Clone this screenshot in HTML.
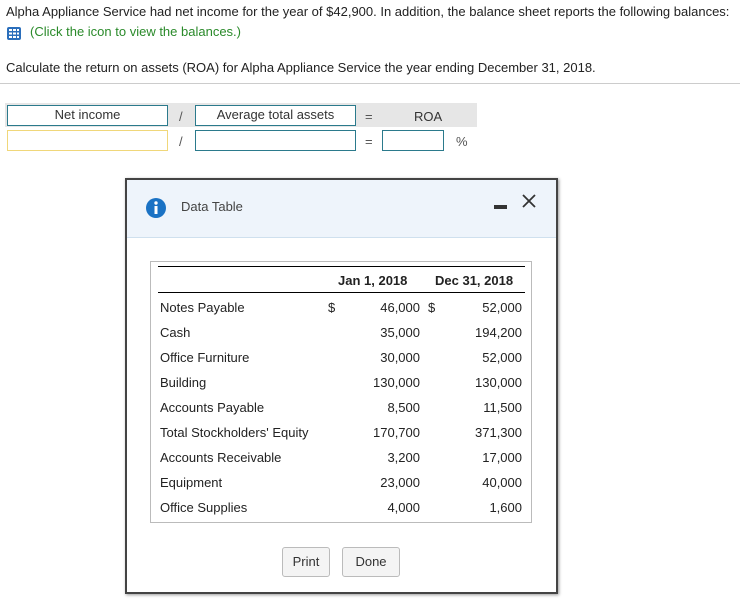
<!DOCTYPE html>
<html><head><style>
body{margin:0;width:740px;height:611px;background:#fff;font-family:"Liberation Sans",sans-serif;font-size:13px;color:#222;position:relative;overflow:hidden}
.a{position:absolute;white-space:nowrap}
.box{position:absolute;border:1px solid #2b7a8c;background:#fff;box-sizing:border-box;text-align:center;line-height:18px;color:#333}
.r{position:absolute;font-size:13px;color:#222}
.num{text-align:right;width:80px}
</style></head><body>
<div class="a" style="left:6px;top:4px">Alpha Appliance Service had net income for the year of $42,900. In addition, the balance sheet reports the following balances:</div>
<svg class="a" style="left:7px;top:27px" width="14" height="13"><rect x="0" y="0" width="14" height="13" rx="2" fill="#2a6ebb"/><g fill="#fff"><rect x="2" y="2" width="3" height="2"/><rect x="6" y="2" width="3" height="2"/><rect x="10" y="2" width="2" height="2"/><rect x="2" y="5.5" width="3" height="2"/><rect x="6" y="5.5" width="3" height="2"/><rect x="10" y="5.5" width="2" height="2"/><rect x="2" y="9" width="3" height="2"/><rect x="6" y="9" width="3" height="2"/><rect x="10" y="9" width="2" height="2"/></g></svg>
<div class="a" style="left:30px;top:24px;color:#2a8a2a">(Click the icon to view the balances.)</div>
<div class="a" style="left:6px;top:60px">Calculate the return on assets (ROA) for Alpha Appliance Service the year ending December 31, 2018.</div>
<div class="a" style="left:0;top:83px;width:740px;height:1px;background:#ccc"></div>
<div class="a" style="left:5px;top:103px;width:472px;height:24px;background:#e6e6e6"></div>
<div class="box" style="left:7px;top:105px;width:161px;height:21px">Net income</div>
<div class="a" style="left:179px;top:109px;color:#555">/</div>
<div class="box" style="left:195px;top:105px;width:161px;height:21px">Average total assets</div>
<div class="a" style="left:365px;top:109px;color:#555">=</div>
<div class="a" style="left:414px;top:109px;color:#333">ROA</div>
<div class="box" style="left:7px;top:130px;width:161px;height:21px;border-color:#f0d77a"></div>
<div class="a" style="left:179px;top:134px;color:#555">/</div>
<div class="box" style="left:195px;top:130px;width:161px;height:21px"></div>
<div class="a" style="left:365px;top:134px;color:#555">=</div>
<div class="box" style="left:382px;top:130px;width:62px;height:21px"></div>
<div class="a" style="left:456px;top:134px;color:#555">%</div>

<div class="a" style="left:125px;top:178px;width:433px;height:416px;box-sizing:border-box;border:2px solid #444;background:#fff;box-shadow:1px 1px 3px #999"></div>
<div class="a" style="left:127px;top:180px;width:429px;height:57px;background:#eef4fb;border-bottom:1px solid #cfe0ee"></div>
<svg class="a" style="left:146px;top:198px" width="20" height="20"><circle cx="10" cy="10" r="10" fill="#1a72c4"/><rect x="8.5" y="8" width="3" height="8" fill="#fff"/><circle cx="10" cy="5" r="1.7" fill="#fff"/></svg>
<div class="a" style="left:181px;top:199px;font-size:13px;color:#444">Data Table</div>
<div class="a" style="left:494px;top:205px;width:13px;height:4px;background:#333"></div>
<svg class="a" style="left:521px;top:193px" width="16" height="16"><path d="M2 2L14 14M14 2L2 14" stroke="#333" stroke-width="1.8"/></svg>

<div class="a" style="left:150px;top:261px;width:382px;height:262px;box-sizing:border-box;border:1px solid #bbb"></div>
<div class="a" style="left:158px;top:266px;width:367px;height:1px;background:#000"></div>
<div class="a" style="left:158px;top:292px;width:367px;height:1px;background:#000"></div>
<div class="r" style="left:338px;top:273px;font-weight:bold">Jan 1, 2018</div>
<div class="r" style="left:435px;top:273px;font-weight:bold">Dec 31, 2018</div>
<div class="r" style="left:160px;top:295px;line-height:25px">Notes Payable<br>Cash<br>Office Furniture<br>Building<br>Accounts Payable<br>Total Stockholders' Equity<br>Accounts Receivable<br>Equipment<br>Office Supplies</div>
<div class="r" style="left:328px;top:295px;line-height:25px">$</div>
<div class="r" style="left:428px;top:295px;line-height:25px">$</div>
<div class="r num" style="left:340px;top:295px;line-height:25px">46,000<br>35,000<br>30,000<br>130,000<br>8,500<br>170,700<br>3,200<br>23,000<br>4,000</div>
<div class="r num" style="left:442px;top:295px;line-height:25px">52,000<br>194,200<br>52,000<br>130,000<br>11,500<br>371,300<br>17,000<br>40,000<br>1,600</div>

<div class="a" style="left:282px;top:547px;width:48px;height:30px;box-sizing:border-box;border:1px solid #bbb;border-radius:3px;background:#f4f4f4;text-align:center;line-height:28px;font-size:13px;color:#333">Print</div>
<div class="a" style="left:342px;top:547px;width:58px;height:30px;box-sizing:border-box;border:1px solid #bbb;border-radius:3px;background:#f4f4f4;text-align:center;line-height:28px;font-size:13px;color:#333">Done</div>
</body></html>
